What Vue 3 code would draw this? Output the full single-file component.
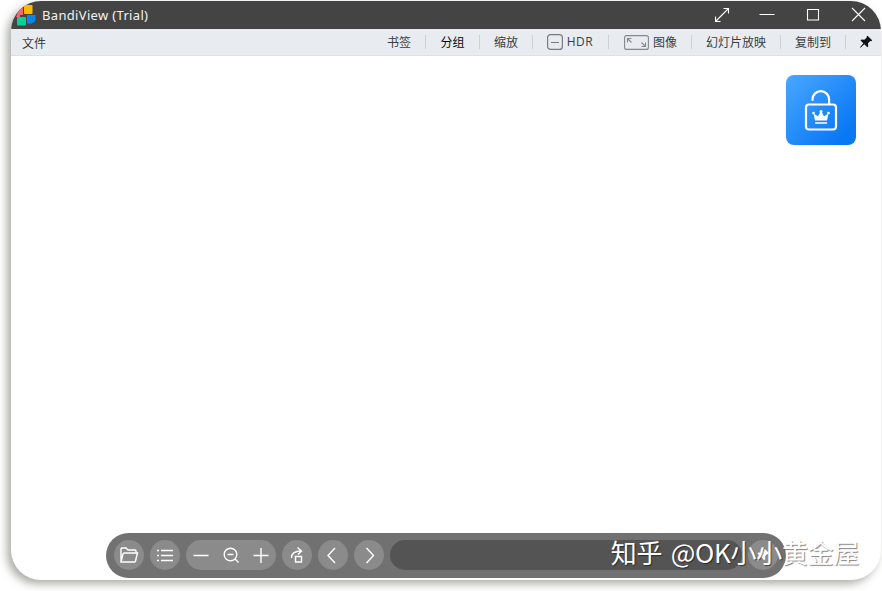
<template>
  <div class="desktop">
    <main class="window">
      <header class="titlebar">
        <svg class="logo" width="25" height="26" viewBox="0 0 25 26">
          <path d="M5 16l3-7 4-4v9H9v2z" fill="#f66479" />
          <rect x="13" y="4" width="8.500" height="9" rx="1" fill="#ffb900" />
          <path d="M16 14h8.500v5q-1 3-4 3.500H16z" fill="#0788e8" />
          <rect x="6" y="16" width="9" height="8.500" rx="1" fill="#04d396" />
        </svg>
        <h1>BandiView (Trial)</h1>
        <div class="window-controls">
          <button v-for="control in controls" :key="control.name" type="button" :title="control.name">
            <svg width="18" height="18" viewBox="0 0 18 18"><path :d="control.path" /></svg>
          </button>
        </div>
      </header>

      <nav class="menu">
        <span class="file-menu">文件</span>
        <div class="menu-items">
          <span
            v-for="item in menuItems"
            :key="item.label"
            class="menu-item"
            :class="{
              'menu-item--strong': item.strong,
              'menu-item--hdr': item.icon === 'hdr',
              'menu-item--image': item.icon === 'image',
            }"
            :style="{ width: `${item.width}px` }"
          >
            <svg v-if="item.icon === 'hdr'" class="hdr-icon" width="16" height="16" viewBox="0 0 16 16">
              <rect x=".6" y=".6" width="14.8" height="14.8" rx="3" /><path d="M4 8.500h8" />
            </svg>
            <svg v-if="item.icon === 'image'" class="image-icon" width="25" height="15" viewBox="0 0 25 15">
              <rect x=".6" y=".6" width="23.8" height="13.8" rx="2" />
              <path d="M3.500 7.500v-4h4M3.500 3.500l4 4M21.500 7.500v4h-4M21.500 11.500l-4-4" />
            </svg>
            <span>{{ item.label }}</span>
          </span>
          <span class="menu-pin">
            <svg width="14" height="14" viewBox="0 0 14 14"><path :d="pinPath" /></svg>
          </span>
        </div>
      </nav>

      <section class="viewer">
        <button class="unlock" type="button" title="Unlock">
          <svg width="34" height="42" viewBox="0 0 34 42">
            <path class="lock" d="M8.500 11V10.500a8.300 8.300 0 0 1 16.600 0v5M5 15.500h24q3 0 3 3v19q0 3-3 3H5q-3 0-3-3V18.500q0-3 3-3z" />
            <path class="crown" d="M11 31.500L9.500 24.500l4.500 2.700 3-5.200 3 5.200 4.500-2.700L23 31.500z" />
            <circle class="crown" cx="9.500" cy="24" r="1.300" />
            <circle class="crown" cx="17" cy="22.500" r="1.500" />
            <circle class="crown" cx="24.500" cy="24" r="1.300" />
            <path class="crown-base" d="M11.500 34h11" />
          </svg>
        </button>

        <div class="toolbar">
          <button class="tool" type="button" title="Open">
            <svg width="20" height="18" viewBox="0 0 20 18">
              <path d="M2 16V3q0-1 1-1h4l2 2h7q1 0 1 1v2M2 16L4 8q.300-1 1.300-1H18.500L16.500 15q-.300 1-1.300 1z" />
            </svg>
          </button>
          <button class="tool" type="button" title="List">
            <svg width="18" height="16" viewBox="0 0 18 16">
              <path d="M5 3.500h12M5 8.500h12M5 13.500h12M1 3.500h2M1 8.500h2M1 13.500h2" />
            </svg>
          </button>
          <div class="zoom-tools">
            <button type="button" title="Zoom out"><svg width="18" height="18" viewBox="0 0 18 18"><path d="M1.500 9.500h15" /></svg></button>
            <button type="button" title="Zoom">
              <svg width="18" height="18" viewBox="0 0 18 18"><circle cx="8.500" cy="8.500" r="6.300" /><path d="M5.500 8.500h6M13 13l3.500 3.500" /></svg>
            </button>
            <button type="button" title="Zoom in"><svg width="18" height="18" viewBox="0 0 18 18"><path d="M1.500 9.500h15M9 2v15" /></svg></button>
          </div>
          <button class="tool" type="button" title="Rotate">
            <svg width="16" height="18" viewBox="0 0 16 18">
              <path d="M2.500 12q0-7 9.500-7M8.500 1.500L12.500 5 9 8.500M6.500 10.500h6v5.500h-6z" />
            </svg>
          </button>
          <button class="tool" type="button" title="Previous">
            <svg width="18" height="18" viewBox="0 0 18 18"><path d="M11 2L4 9.500l7 7.500" /></svg>
          </button>
          <button class="tool" type="button" title="Next">
            <svg width="18" height="18" viewBox="0 0 18 18"><path d="M6.500 2l7 7.500-7 7.500" /></svg>
          </button>
          <div class="track"></div>
          <button class="tool tool--pin" type="button" title="Pin">
            <svg width="14" height="14" viewBox="0 0 14 14"><path :d="pinPath" /></svg>
          </button>
        </div>
      </section>
    </main>
    <div class="watermark">知乎 @OK小小黄金屋</div>
  </div>
</template>

<script setup>
const controls = [
  { name: 'Full screen', path: 'M2.500 15.500L15.500 2.500M10.500 2.500h5v5M2.500 10.500v5h5' },
  { name: 'Minimize', path: 'M1.500 8.500h15' },
  { name: 'Maximize', path: 'M3.500 3.500h11v10.500h-11z' },
  { name: 'Close', path: 'M3 2l13 13M16 2L3 15' },
]

const menuItems = [
  { label: '书签', width: 53 },
  { label: '分组', width: 54, strong: true },
  { label: '缩放', width: 53 },
  { label: 'HDR', width: 76, icon: 'hdr' },
  { label: '图像', width: 83, icon: 'image' },
  { label: '幻灯片放映', width: 89 },
  { label: '复制到', width: 65 },
]

const pinPath = 'M8.500.8L13.200 5.200l-.9 1-1-.2L9 8.300l.3 3-1 1-3-3-3.800 3.500-.5-.5 3.300-4L1.500 5.500l1-1 2.800.3 2.500-2.300-.2-.9z'
</script>

<style>
body {
  background: #fff;
}
</style>

<style scoped>
.desktop {
  position: relative;
  box-sizing: border-box;
  width: 882px;
  height: 591px;
  padding: 1px 1px 11px 11px;
  overflow: hidden;
  font-family: "Open Sans", "Noto Sans CJK SC", sans-serif;
}

.window {
  display: flex;
  flex-direction: column;
  height: 579px;
  border-radius: 30px;
  overflow: hidden;
  background: #fff;
  box-shadow: -4px 4px 9px rgba(70, 70, 60, 0.45);
}

button {
  display: flex;
  align-items: center;
  justify-content: center;
  padding: 0;
  border: 0;
  background: none;
}

svg {
  display: block;
  flex: none;
  fill: none;
  stroke: none;
}

.titlebar {
  display: flex;
  height: 28px;
  flex: none;
  align-items: center;
  background: #444;
  color: #f2f2f2;
}

.logo {
  margin-top: -2px;
}

.titlebar h1 {
  flex: 1;
  margin: 0 0 0 6px;
  font-family: "Noto Sans", sans-serif;
  font-size: 13px;
  line-height: 28px;
  font-weight: 400;
  letter-spacing: 0.33px;
}

.window-controls {
  display: flex;
}

.window-controls button {
  width: 45.5px;
  height: 28px;
}

.window-controls svg {
  stroke: #fff;
  stroke-width: 1.1;
}

.menu {
  display: flex;
  box-sizing: border-box;
  height: 27px;
  flex: none;
  justify-content: space-between;
  border-bottom: 1px solid #dce0e4;
  background: #e8ecf0;
  color: #3a3c40;
  font-size: 12px;
  line-height: 27px;
}

.file-menu {
  padding-left: 11px;
  line-height: 29px;
}

.menu-items {
  display: flex;
  align-items: center;
}

.menu-item {
  position: relative;
  display: flex;
  box-sizing: border-box;
  height: 26px;
  padding-right: 1px;
  align-items: center;
  justify-content: center;
  gap: 4px;
  white-space: nowrap;
}

.menu-item::after {
  content: '';
  position: absolute;
  right: 0;
  height: 14px;
  border-right: 1px solid #cdd1d5;
}

.menu-item--strong {
  color: #080a0c;
}

.menu-item--hdr {
  padding-right: 2px;
  letter-spacing: 0.5px;
}

.menu-item--hdr span {
  margin-bottom: 2px;
}

.menu-item--image {
  padding-right: 0;
}

.hdr-icon {
  stroke: #777b80;
  stroke-width: 1.2;
}

.image-icon {
  stroke: #85898d;
  stroke-width: 1.1;
}

.menu-pin {
  display: flex;
  width: 35px;
  justify-content: center;
}

.menu-pin svg {
  margin-left: 4px;
  fill: #111417;
}

.viewer {
  display: flex;
  flex: 1;
  flex-direction: column;
  justify-content: space-between;
}

.unlock {
  width: 70px;
  height: 70px;
  margin: 19px 25px 0 auto;
  border-radius: 8px;
  background: linear-gradient(135deg, #4ba7ff, #0878f5 85%);
}

.lock,
.crown-base {
  stroke: #fff;
  stroke-width: 2.2;
  stroke-linecap: round;
}

.crown-base {
  stroke-width: 1.4;
}

.crown {
  fill: #fff;
}

.toolbar {
  display: flex;
  box-sizing: border-box;
  width: 680px;
  height: 45px;
  margin: 0 0 2px 95px;
  padding: 0 8px 1px;
  align-items: center;
  gap: 6px;
  border-radius: 23px;
  background: #717171;
}

.toolbar svg {
  stroke: #fff;
  stroke-width: 1.4;
}

.tool {
  width: 30px;
  height: 30px;
  flex: none;
  border-radius: 50%;
  background: #8b8b8b;
}

.zoom-tools {
  display: flex;
  flex: none;
  width: 90px;
  height: 30px;
  border-radius: 15px;
  background: #8b8b8b;
}

.zoom-tools button {
  width: 30px;
}

.track {
  height: 30px;
  flex: 1;
  border-radius: 15px;
  background: #545454;
}

.toolbar .tool--pin svg {
  fill: #fff;
  stroke: none;
}

.watermark {
  position: absolute;
  right: 23px;
  bottom: 21px;
  color: #fff;
  font-family: "Noto Sans CJK SC", sans-serif;
  font-size: 26px;
  line-height: 36px;
  letter-spacing: -0.3px;
  word-spacing: 3px;
  white-space: nowrap;
  text-shadow: 1px 1px 1px rgba(0, 0, 0, 0.5);
}
</style>
